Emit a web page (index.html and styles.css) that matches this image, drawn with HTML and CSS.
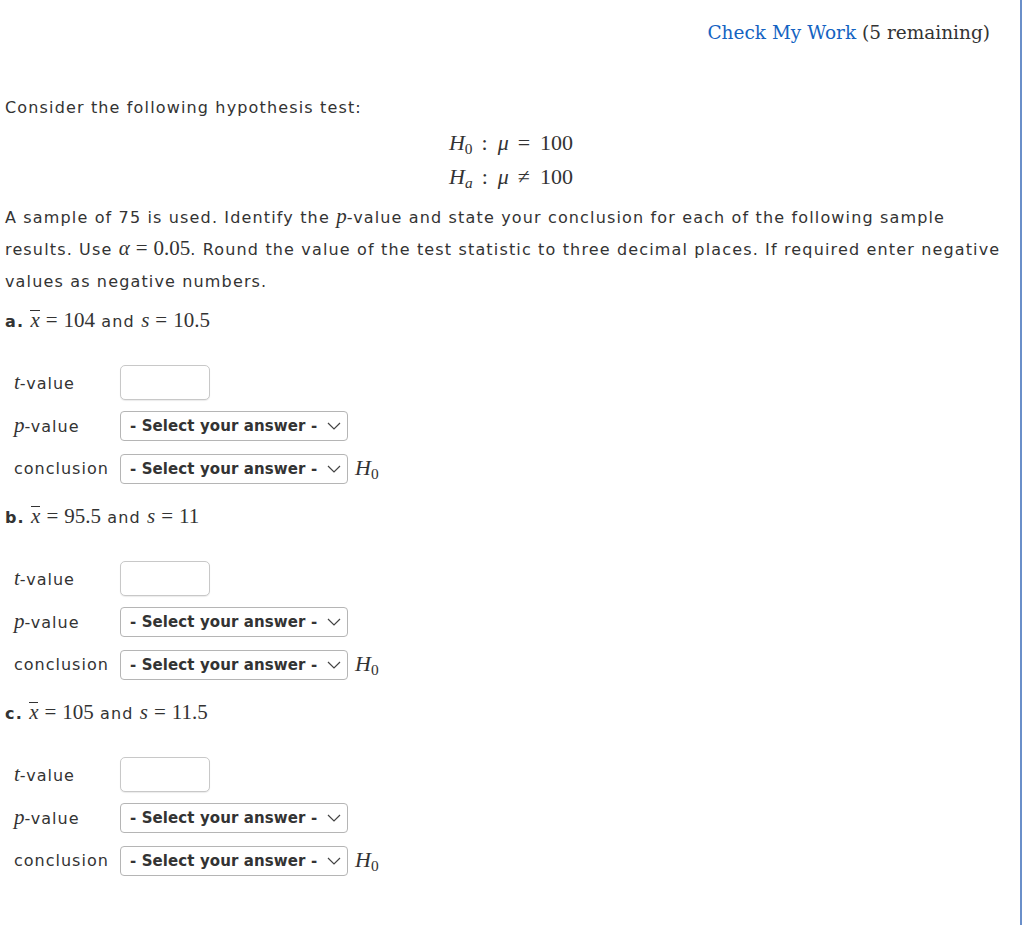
FILE: index.html
```html
<!DOCTYPE html>
<html lang="en">
<head>
<meta charset="utf-8">
<title>Hypothesis test</title>
<link rel="stylesheet" href="styles.css">
</head>
<body>
<div class="frame">
  <div class="topbar">
    <a class="check" href="#">Check My Work</a> <span class="remaining">(5 remaining)</span>
  </div>

  <div class="content">
    <p class="intro">Consider the following hypothesis test:</p>
    <div class="display">
      <div class="eq"><i>H</i><sub>0</sub><span class="op">:</span><i>μ</i><span class="op">=</span>100</div>
      <div class="eq"><i>H</i><sub><i>a</i></sub><span class="op">:</span><i>μ</i><span class="op">≠</span>100</div>
    </div>
    <p class="para">A sample of 75 is used. Identify the <span class="m"><i>p</i></span>-value and state your conclusion for each of the following sample results. Use <span class="m"><i>α</i><span class="rel">=</span>0.05</span>. Round the value of the test statistic to three decimal places. If required enter negative values as negative numbers.</p>

    <section class="part">
      <p class="part-title"><b>a.</b> <span class="m"><i class="ovl">x</i><span class="rel">=</span>104</span> and <span class="m"><i>s</i><span class="rel">=</span>10.5</span></p>
      <div class="rows">
        <div class="lbl"><span class="m"><i>t</i></span>-value</div>
        <div class="fld"><input class="tin" type="text"></div>
        <div class="lbl"><span class="m"><i>p</i></span>-value</div>
        <div class="fld"><span class="sel"><select><option>- Select your answer -</option></select><svg class="chev" width="14" height="8" viewBox="0 0 14 8"><path d="M1 1 L7 7 L13 1" fill="none" stroke="#444" stroke-width="1.2"/></svg></span></div>
        <div class="lbl">conclusion</div>
        <div class="fld"><span class="sel"><select><option>- Select your answer -</option></select><svg class="chev" width="14" height="8" viewBox="0 0 14 8"><path d="M1 1 L7 7 L13 1" fill="none" stroke="#444" stroke-width="1.2"/></svg></span><span class="h0"><i>H</i><sub>0</sub></span></div>
      </div>
    </section>

    <section class="part">
      <p class="part-title"><b>b.</b> <span class="m"><i class="ovl">x</i><span class="rel">=</span>95.5</span> and <span class="m"><i>s</i><span class="rel">=</span>11</span></p>
      <div class="rows">
        <div class="lbl"><span class="m"><i>t</i></span>-value</div>
        <div class="fld"><input class="tin" type="text"></div>
        <div class="lbl"><span class="m"><i>p</i></span>-value</div>
        <div class="fld"><span class="sel"><select><option>- Select your answer -</option></select><svg class="chev" width="14" height="8" viewBox="0 0 14 8"><path d="M1 1 L7 7 L13 1" fill="none" stroke="#444" stroke-width="1.2"/></svg></span></div>
        <div class="lbl">conclusion</div>
        <div class="fld"><span class="sel"><select><option>- Select your answer -</option></select><svg class="chev" width="14" height="8" viewBox="0 0 14 8"><path d="M1 1 L7 7 L13 1" fill="none" stroke="#444" stroke-width="1.2"/></svg></span><span class="h0"><i>H</i><sub>0</sub></span></div>
      </div>
    </section>

    <section class="part">
      <p class="part-title"><b>c.</b> <span class="m"><i class="ovl">x</i><span class="rel">=</span>105</span> and <span class="m"><i>s</i><span class="rel">=</span>11.5</span></p>
      <div class="rows">
        <div class="lbl"><span class="m"><i>t</i></span>-value</div>
        <div class="fld"><input class="tin" type="text"></div>
        <div class="lbl"><span class="m"><i>p</i></span>-value</div>
        <div class="fld"><span class="sel"><select><option>- Select your answer -</option></select><svg class="chev" width="14" height="8" viewBox="0 0 14 8"><path d="M1 1 L7 7 L13 1" fill="none" stroke="#444" stroke-width="1.2"/></svg></span></div>
        <div class="lbl">conclusion</div>
        <div class="fld"><span class="sel"><select><option>- Select your answer -</option></select><svg class="chev" width="14" height="8" viewBox="0 0 14 8"><path d="M1 1 L7 7 L13 1" fill="none" stroke="#444" stroke-width="1.2"/></svg></span><span class="h0"><i>H</i><sub>0</sub></span></div>
      </div>
    </section>
  </div>
</div>
</body>
</html>
```

FILE: styles.css
```css
html, body {
  margin: 0;
  padding: 0;
  background: #fff;
}
body {
  font-family: "DejaVu Sans", Verdana, sans-serif;
  color: #333;
  font-size: 16px;
  letter-spacing: 1.15px;
}
.frame {
  width: 1022px;
  min-height: 925px;
  border-right: 2px solid #6a8fc9;
  box-sizing: border-box;
}
.topbar {
  height: 64px;
  box-sizing: border-box;
  padding-top: 20px;
  padding-right: 30px;
  text-align: right;
  font-family: "DejaVu Serif", Georgia, serif;
  font-size: 18.5px;
  line-height: 26px;
  letter-spacing: 0;
}
.check {
  color: #1463c2;
  text-decoration: none;
}
.remaining {
  color: #333;
}
.content {
  padding-left: 5px;
  padding-right: 3px;
}
p {
  margin: 0;
}
.intro {
  margin-top: 28px;
  line-height: 32px;
}
.display {
  margin-top: 2px;
  text-align: center;
  font-family: "Liberation Serif", "Times New Roman", serif;
  font-size: 22px;
  letter-spacing: 0;
}
.eq {
  height: 34px;
  line-height: 34px;
}
.eq sub, .h0 sub {
  font-size: 0.7em;
  vertical-align: -0.25em;
  line-height: 1;
  font-style: normal;
}
.op {
  padding: 0 10px 0 9px;
}
.m {
  font-family: "Liberation Serif", "Times New Roman", serif;
  font-size: 21px;
  line-height: 1;
  letter-spacing: 0;
}
.rel {
  padding: 0 6px;
}
.ovl {
  display: inline-block;
  line-height: 0.8;
  border-top: 1px solid #333;
  padding-top: 1px;
}
.para {
  margin-top: 8px;
  line-height: 32px;
}
.part-title {
  margin-top: 8px;
  line-height: 32px;
}
.part + .part .part-title {
  margin-top: 12px;
}
.rows {
  margin-top: 23px;
  padding-left: 9px;
  display: grid;
  grid-template-columns: 106px auto;
  grid-auto-rows: 43px;
  align-items: center;
}
.lbl {
  line-height: 20px;
  letter-spacing: 1px;
}
.fld {
  display: flex;
  align-items: center;
}
.tin {
  width: 90px;
  height: 35px;
  box-sizing: border-box;
  border: 1px solid #c8c8c8;
  border-radius: 5px;
  background: #fff;
  margin: 0;
  box-shadow: 0 1px 1px rgba(0,0,0,0.08);
}
.sel {
  position: relative;
  display: inline-block;
}
.sel select {
  appearance: none;
  -webkit-appearance: none;
  width: 228px;
  height: 30px;
  box-sizing: border-box;
  margin: 0;
  padding: 0 0 0 9px;
  border: 1px solid #b5b5b5;
  border-radius: 4px;
  background: #fff;
  font-family: "DejaVu Sans", Verdana, sans-serif;
  font-weight: bold;
  font-size: 15px;
  letter-spacing: 0.1px;
  color: #333;
}
.chev {
  position: absolute;
  right: 7px;
  top: 11px;
  pointer-events: none;
}
.h0 {
  margin-left: 7px;
  font-family: "Liberation Serif", "Times New Roman", serif;
  font-size: 22px;
  letter-spacing: 0;
}
```
